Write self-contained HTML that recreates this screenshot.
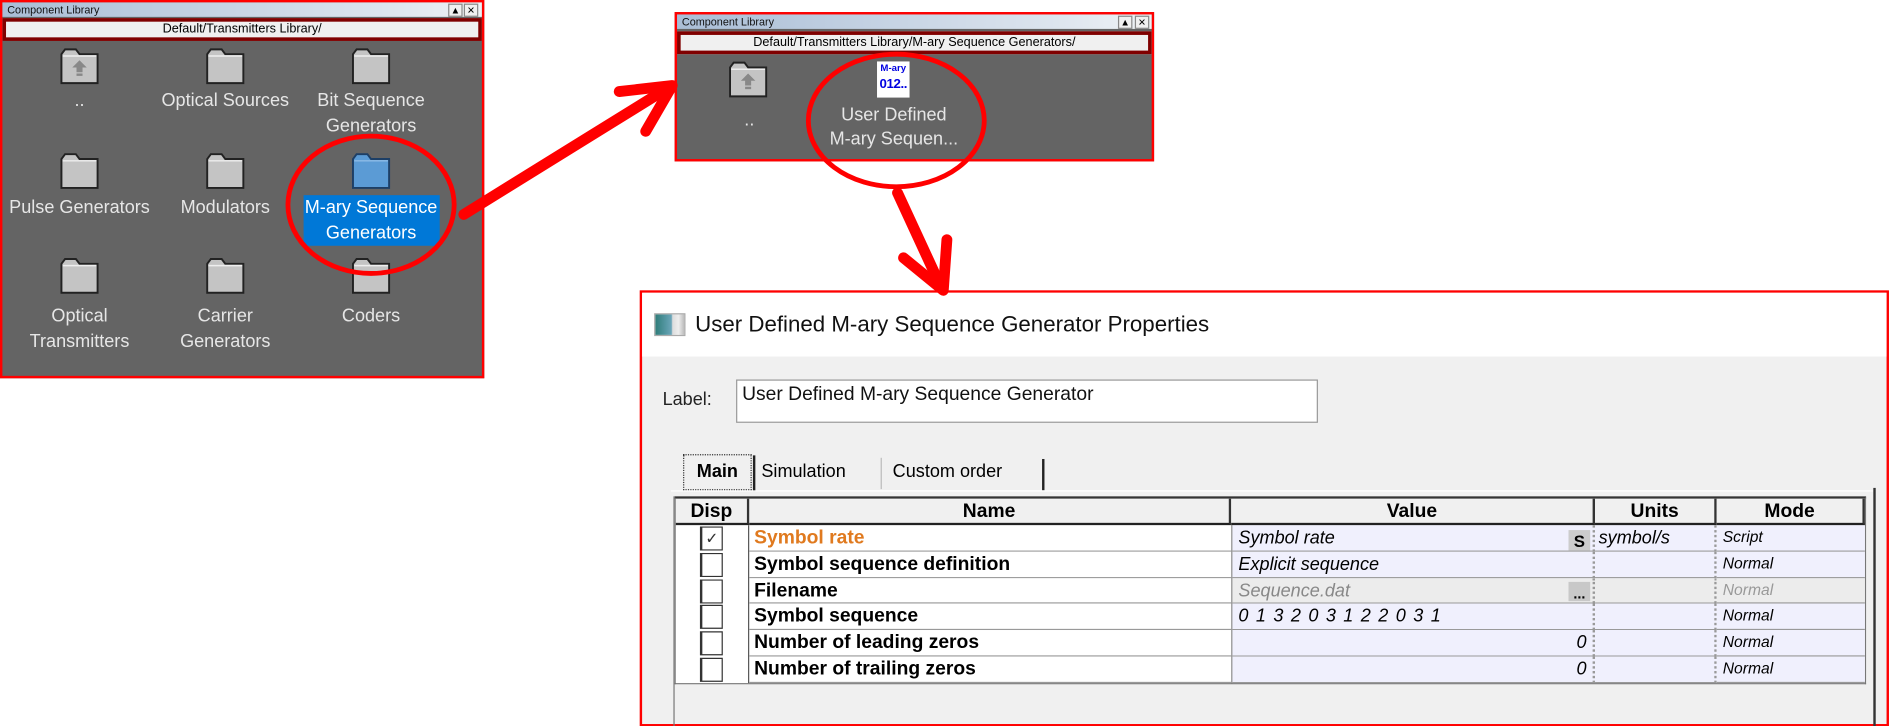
<!DOCTYPE html>
<html><head><meta charset="utf-8"><style>
html,body{margin:0;padding:0;background:#fff;width:1889px;height:726px;overflow:hidden}
#s{position:absolute;left:0;top:0;width:1568px;height:603px;transform:scale(1.2047);transform-origin:0 0;font-family:"Liberation Sans",sans-serif}
.a{position:absolute}
.win{position:absolute;border:2px solid #f00;background:#646464;box-sizing:border-box}
.tb{position:absolute;left:0;right:0;top:0;height:12px;background:linear-gradient(90deg,#a9bdd6,#dde5ee 80%,#eef2f5);font-size:9px;line-height:12px;padding-left:4px;color:#111}
.btn{position:absolute;top:1px;width:10px;height:9px;background:#f0f0f0;border:1px solid #888;font-size:8px;line-height:9px;text-align:center;color:#000}
.path{position:absolute;left:0;right:0;height:13px;border:3px solid #800000;background:#f0f0f0;font-size:10.5px;line-height:13px;text-align:center;color:#000}
.lbl{position:absolute;color:#e6e6e6;font-size:15px;text-align:center;line-height:21px;width:130px}
.cell{position:absolute;box-sizing:border-box;overflow:hidden;white-space:nowrap}
.hd{font-weight:bold;font-size:16px;text-align:center;line-height:21px;background:#f0f0f0;border-right:2px solid #333;border-bottom:2px solid #222;top:414px;height:22px}
.nm{font-weight:bold;font-size:16px;line-height:21px;padding-left:4px;background:#fff;border-bottom:1px solid #999}
.vl{font-style:italic;font-size:15px;line-height:21px;padding-left:5px;background:#f0f0fd;border-bottom:1px solid #999;border-right:2px dotted #999}
.md{font-style:italic;font-size:13px;line-height:20px;padding-left:5px;background:#f0f0fd;border-bottom:1px solid #999}
.ck{position:absolute;width:19px;height:20px;border:1px solid #333;border-left:2px solid #333;background:#fff;box-sizing:border-box}
</style></head><body><div id="s">

<div class="win" style="left:0;top:0;width:402px;height:314px">
 <div class="tb">Component Library</div>
 <div class="btn" style="left:370px">▲</div><div class="btn" style="left:383px">✕</div>
 <div class="path" style="top:13px">Default/Transmitters Library/</div>
</div>

<svg class="a" style="left:0;top:0" width="1568" height="603">
 <defs>
  <g id="fd"><path d="M1 6 L1 30 L31 30 L31 6 L16 6 L13 2 L4 2 L1 6 Z" fill="#c4c4c4" stroke="#222" stroke-width="1.6"/><line x1="2" y1="7.5" x2="30" y2="7.5" stroke="#eee" stroke-width="1.2"/></g>
  <g id="fdb"><path d="M1 6 L1 30 L31 30 L31 6 L16 6 L13 2 L4 2 L1 6 Z" fill="#5b9bd5" stroke="#1d3f66" stroke-width="1.6"/><line x1="2" y1="7.5" x2="30" y2="7.5" stroke="#8cbbe6" stroke-width="1.2"/></g>
  <g id="up"><use href="#fd"/><path d="M16 11 L10 17 L13.5 17 L13.5 21 L18.5 21 L18.5 17 L22 17 Z" fill="#888"/><rect x="13.5" y="22" width="5" height="2" fill="#888"/></g>
 </defs>
 <use href="#up" x="50" y="39"/>
 <use href="#fd" x="171" y="39"/>
 <use href="#fd" x="292" y="39"/>
 <use href="#fd" x="50" y="126"/>
 <use href="#fd" x="171" y="126"/>
 <use href="#fdb" x="292" y="126"/>
 <use href="#fd" x="50" y="213"/>
 <use href="#fd" x="171" y="213"/>
 <use href="#fd" x="292" y="213"/>
</svg>

<div class="a" style="left:252px;top:162px;width:113px;height:42px;background:#0078d7"></div>
<div class="lbl" style="left:1px;top:73px">..</div>
<div class="lbl" style="left:122px;top:73px">Optical Sources</div>
<div class="lbl" style="left:243px;top:73px">Bit Sequence<br>Generators</div>
<div class="lbl" style="left:1px;top:162px;width:130px">Pulse Generators</div>
<div class="lbl" style="left:122px;top:162px">Modulators</div>
<div class="lbl" style="left:243px;top:162px;color:#fff">M-ary Sequence<br>Generators</div>
<div class="lbl" style="left:1px;top:252px">Optical<br>Transmitters</div>
<div class="lbl" style="left:122px;top:252px">Carrier<br>Generators</div>
<div class="lbl" style="left:243px;top:252px">Coders</div>

<div class="win" style="left:560px;top:10px;width:398px;height:124px">
 <div class="tb">Component Library</div>
 <div class="btn" style="left:366px">▲</div><div class="btn" style="left:380px">✕</div>
 <div class="path" style="top:14px">Default/Transmitters Library/M-ary Sequence Generators/</div>
</div>
<svg class="a" style="left:605px;top:50px" width="34" height="32"><use href="#up"/></svg>
<div class="a" style="left:728px;top:51px;width:27px;height:30px;background:#fff;text-align:center;color:#0000e0;font-weight:bold;overflow:hidden">
 <div style="font-size:8px;line-height:11px">M-ary</div><div style="font-size:11px;line-height:16px;letter-spacing:-0.3px">012..</div></div>
<div class="lbl" style="left:557px;top:89px">..</div>
<div class="lbl" style="left:677px;top:86px;line-height:20px">User Defined<br>M-ary Sequen...</div>

<div class="a" style="left:531px;top:241px;width:1037px;height:362px;border:2px solid #f00;box-sizing:border-box;background:#f0f0f0"></div>
<div class="a" style="left:533px;top:243px;width:1033px;height:53px;background:#fff"></div>
<div class="a" style="left:543px;top:260px;width:24px;height:17px;background:linear-gradient(90deg,#2f7d7a,#6aa5b8 55%,#ddd 60%,#eee 80%,#bbb);border:1px solid #aaa"></div>
<div class="a" style="left:577px;top:258px;font-size:18.5px;color:#111">User Defined M-ary Sequence Generator Properties</div>
<div class="a" style="left:550px;top:323px;font-size:15px;color:#222">Label:</div>
<div class="a" style="left:611px;top:315px;width:483px;height:36px;background:#fff;border:1px solid #999;box-sizing:border-box;font-size:16px;padding:3px 4px;color:#111">User Defined M-ary Sequence Generator</div>

<div class="a" style="left:567px;top:377px;width:55px;height:28px;border:1px dotted #333;font-weight:bold;font-size:15px;line-height:28px;text-align:center">Main</div>
<div class="a" style="left:625px;top:378px;width:2px;height:30px;background:#222"></div>
<div class="a" style="left:632px;top:383px;font-size:15px">Simulation</div>
<div class="a" style="left:731px;top:380px;width:1px;height:26px;background:#bbb"></div>
<div class="a" style="left:741px;top:383px;font-size:15px">Custom order</div>
<div class="a" style="left:865px;top:381px;width:2px;height:26px;background:#222"></div>
<div class="a" style="left:557px;top:407px;width:1000px;height:1px;background:#fff"></div>
<div class="a" style="left:1555px;top:405px;width:2px;height:198px;background:#333"></div>
<div class="a" style="left:559px;top:412px;width:1px;height:191px;background:#777"></div>

<div class="a" style="left:560px;top:412px;width:989px;height:156px;border:1px solid #777;border-top:2px solid #333;box-sizing:border-box;background:#fff"></div>
<div class="cell hd" style="left:561px;width:61px">Disp</div>
<div class="cell hd" style="left:622px;width:400px">Name</div>
<div class="cell hd" style="left:1022px;width:302px">Value</div>
<div class="cell hd" style="left:1324px;width:101px">Units</div>
<div class="cell hd" style="left:1425px;width:123px">Mode</div>

<div class="a" style="left:561px;top:436px;width:61px;height:131px;background:#fff"></div>
<div class="a" style="left:621px;top:436px;width:1px;height:131px;background:#444"></div>
<div class="a" style="left:1022px;top:436px;width:1px;height:131px;background:#777"></div>

<div class="ck" style="left:581px;top:437px;font-size:13px;line-height:18px;text-align:center;color:#333">✓</div>
<div class="ck" style="left:581px;top:459px"></div>
<div class="ck" style="left:581px;top:481px"></div>
<div class="ck" style="left:581px;top:502px"></div>
<div class="ck" style="left:581px;top:524px"></div>
<div class="ck" style="left:581px;top:546px"></div>

<div class="cell nm" style="left:622px;top:436px;width:400px;height:22px;color:#e07a1f">Symbol rate</div>
<div class="cell nm" style="left:622px;top:458px;width:400px;height:22px">Symbol sequence definition</div>
<div class="cell nm" style="left:622px;top:480px;width:400px;height:21px">Filename</div>
<div class="cell nm" style="left:622px;top:501px;width:400px;height:22px">Symbol sequence</div>
<div class="cell nm" style="left:622px;top:523px;width:400px;height:22px">Number of leading zeros</div>
<div class="cell nm" style="left:622px;top:545px;width:400px;height:22px">Number of trailing zeros</div>

<div class="cell vl" style="left:1023px;top:436px;width:301px;height:22px">Symbol rate</div>
<div class="a" style="left:1302px;top:440px;width:18px;height:17px;background:#ccc;font-weight:bold;font-size:14px;line-height:18px;text-align:center">S</div>
<div class="cell vl" style="left:1023px;top:458px;width:301px;height:22px">Explicit sequence</div>
<div class="cell vl" style="left:1023px;top:480px;width:301px;height:21px;background:#ececec;color:#888">Sequence.dat</div>
<div class="a" style="left:1302px;top:483px;width:18px;height:16px;background:#c8c8c8;font-weight:bold;font-size:12px;line-height:20px;text-align:center">...</div>
<div class="cell vl" style="left:1023px;top:501px;width:301px;height:22px;letter-spacing:1px">0 1 3 2 0 3 1 2 2 0 3 1</div>
<div class="cell vl" style="left:1023px;top:523px;width:301px;height:22px;text-align:right;padding-right:5px">0</div>
<div class="cell vl" style="left:1023px;top:545px;width:301px;height:22px;text-align:right;padding-right:5px">0</div>

<div class="cell vl" style="left:1324px;top:436px;width:101px;height:22px;padding-left:3px">symbol/s</div>
<div class="cell vl" style="left:1324px;top:458px;width:101px;height:22px"></div>
<div class="cell vl" style="left:1324px;top:480px;width:101px;height:21px;background:#ececec"></div>
<div class="cell vl" style="left:1324px;top:501px;width:101px;height:22px"></div>
<div class="cell vl" style="left:1324px;top:523px;width:101px;height:22px"></div>
<div class="cell vl" style="left:1324px;top:545px;width:101px;height:22px"></div>

<div class="cell md" style="left:1425px;top:436px;width:123px;height:22px">Script</div>
<div class="cell md" style="left:1425px;top:458px;width:123px;height:22px">Normal</div>
<div class="cell md" style="left:1425px;top:480px;width:123px;height:21px;background:#ececec;color:#999">Normal</div>
<div class="cell md" style="left:1425px;top:501px;width:123px;height:22px">Normal</div>
<div class="cell md" style="left:1425px;top:523px;width:123px;height:22px">Normal</div>
<div class="cell md" style="left:1425px;top:545px;width:123px;height:22px">Normal</div>

<svg class="a" style="left:0;top:0" width="1568" height="603" fill="none" stroke="#f00" stroke-linecap="round" stroke-linejoin="round">
 <ellipse cx="308" cy="170" rx="69" ry="57" stroke-width="4"/>
 <ellipse cx="744" cy="100" rx="73" ry="55" stroke-width="4"/>
 <path d="M385 178 L556 72" stroke-width="9"/>
 <path d="M514 76 L558 71 L536 109" stroke-width="9"/>
 <path d="M745 160 L781 238" stroke-width="9"/>
 <path d="M750 214 L783 241 L786 199" stroke-width="9"/>
</svg>
</div></body></html>
